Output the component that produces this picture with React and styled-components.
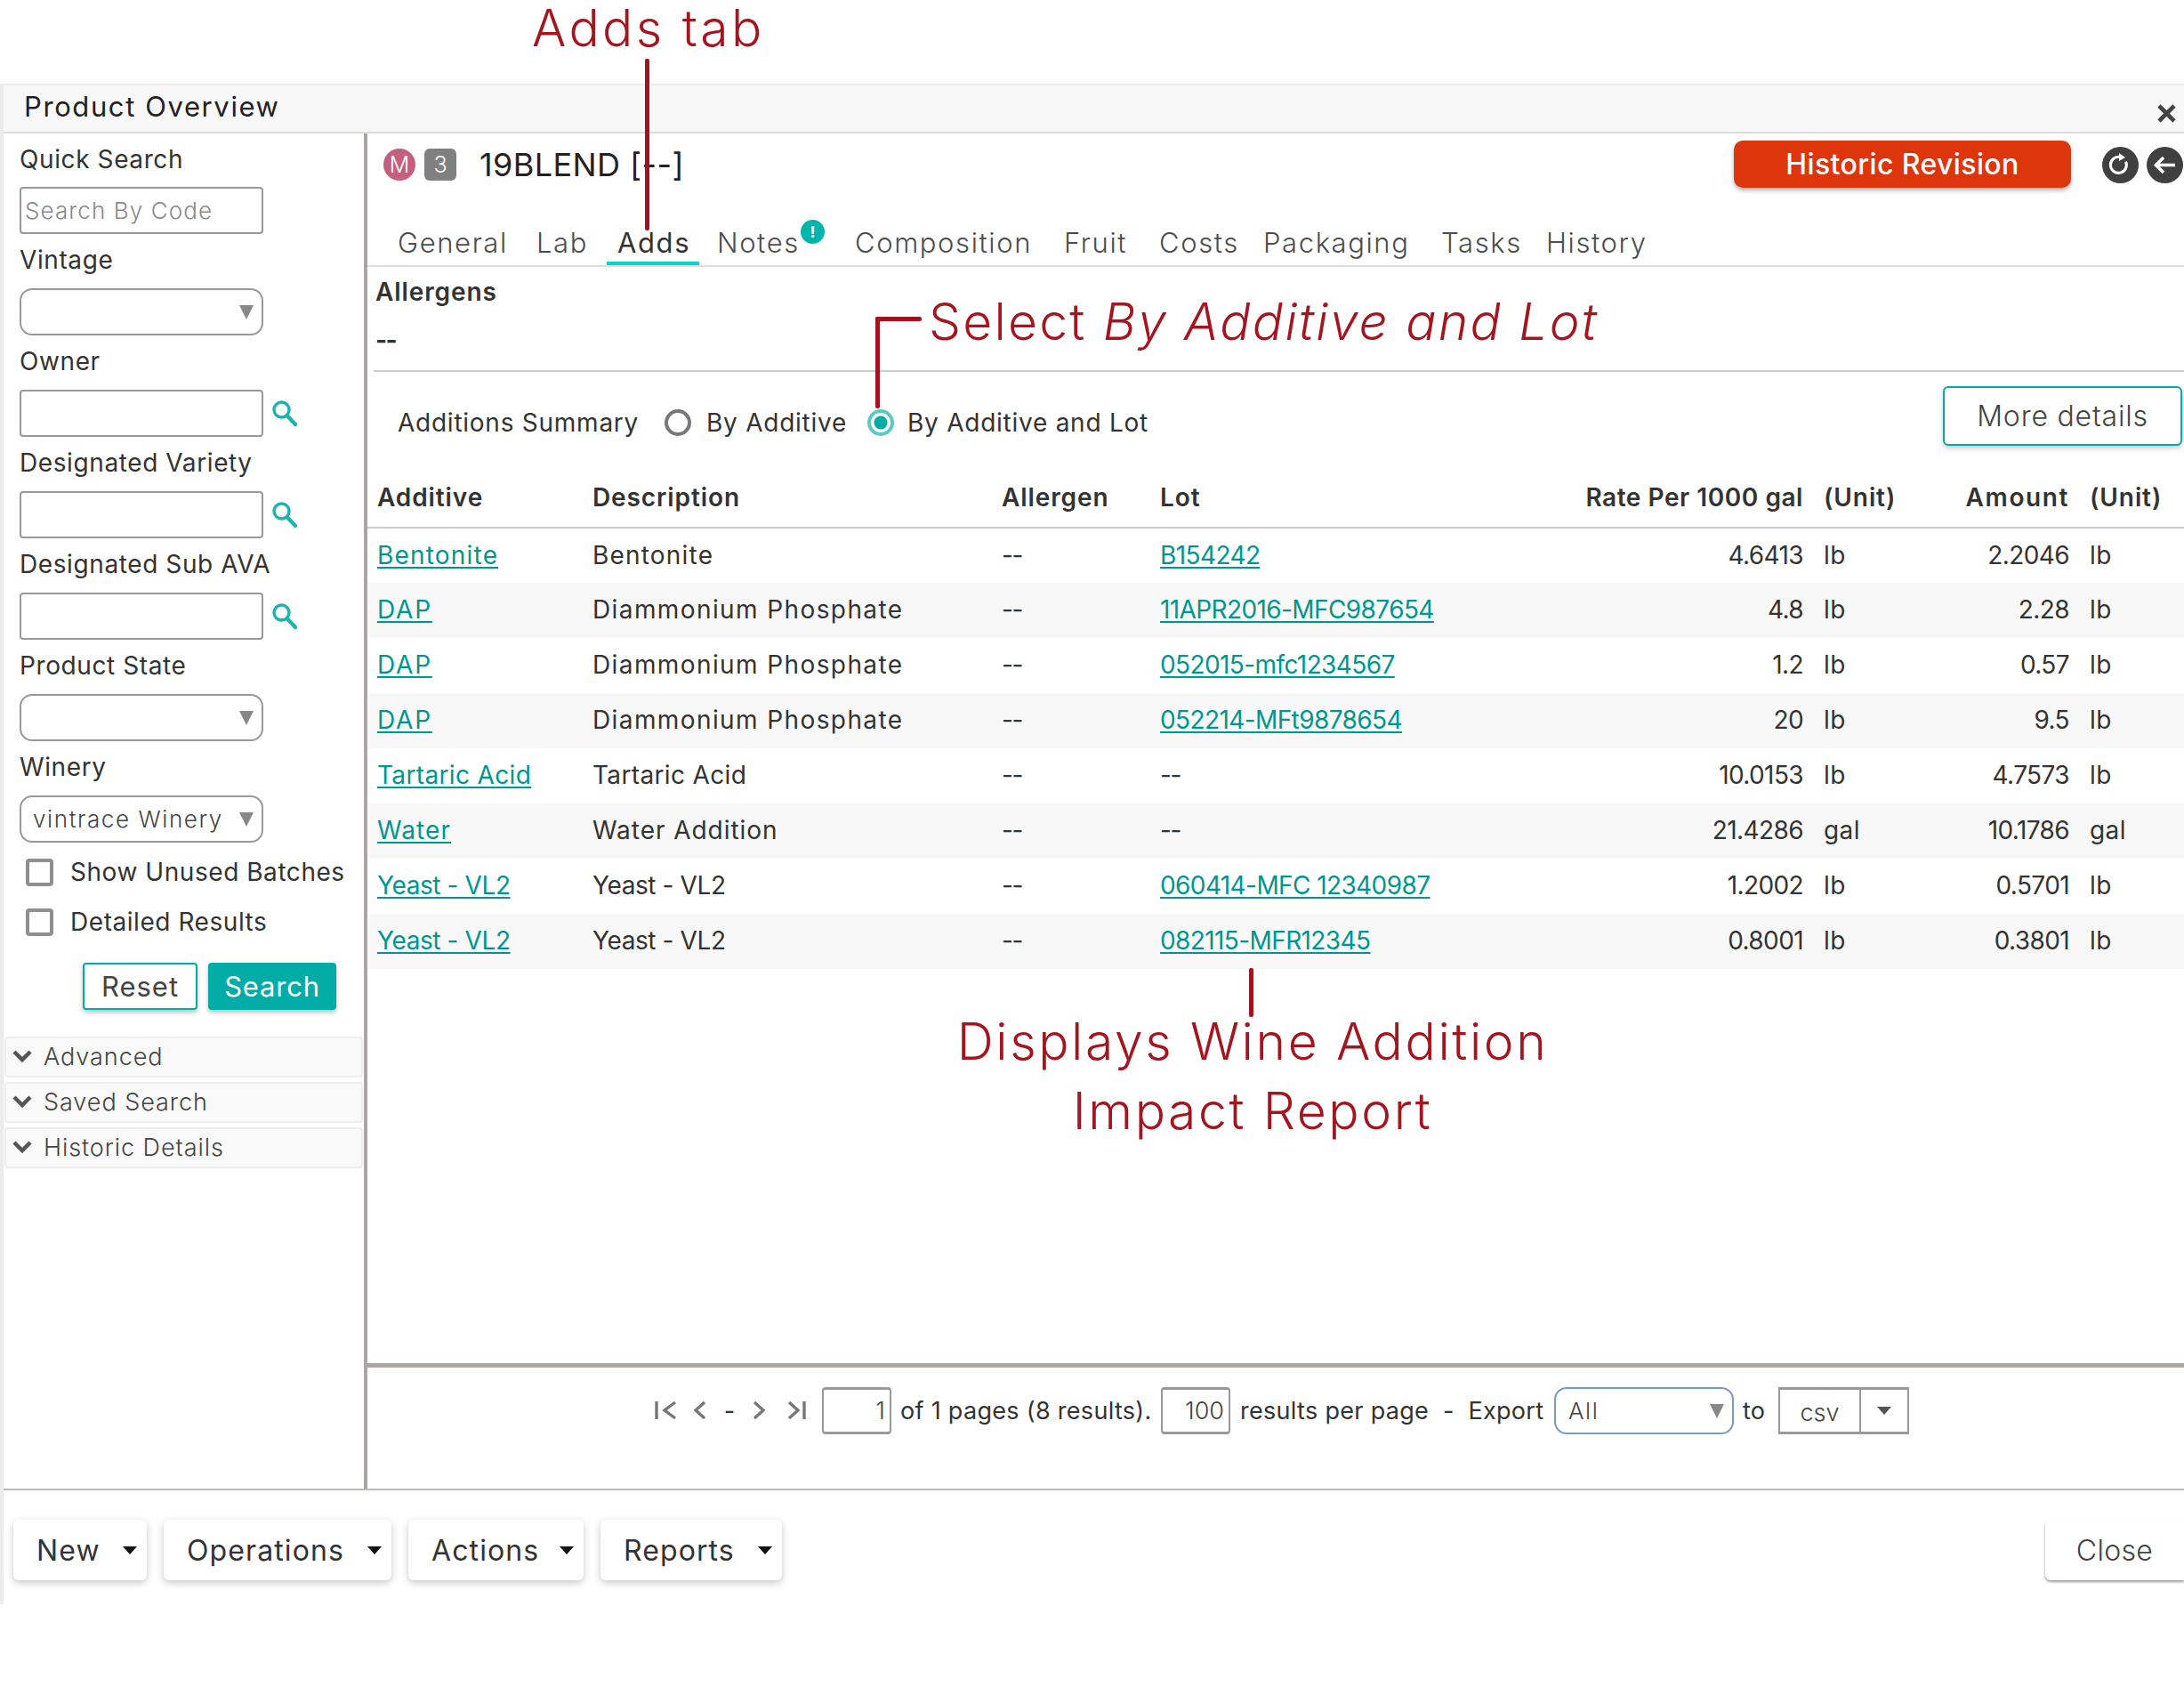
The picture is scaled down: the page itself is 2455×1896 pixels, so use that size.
import React from "react";
import styled, { createGlobalStyle } from "styled-components";

const Global = createGlobalStyle`
  html, body { margin: 0; padding: 0; background: #fff; }
  body { font-family: Inter, "Open Sans", "Liberation Sans", sans-serif; color: #333; }
  * { box-sizing: border-box; }
`;

const Page = styled.div`
  position: relative;
  width: 2455px;
  height: 1896px;
  padding-top: 94px;
  overflow: hidden;
  background: #fff;
`;

const Window = styled.div`
  height: 1709px;
  display: flex;
  flex-direction: column;
  border-left: 4px solid #ececec;
  border-top: 2px solid #eeeeee;
`;

const Header = styled.div`
  height: 54px;
  flex: none;
  display: flex;
  align-items: center;
  justify-content: space-between;
  background: #f8f8f8;
  border-bottom: 2px solid #dddddd;
  padding: 0 8px 0 23px;
`;

const HeaderTitle = styled.div`
  font-size: 31px;
  letter-spacing: 1.6px;
  color: #222;
  margin-top: -5px;
`;

const CloseX = styled.svg`
  width: 23px;
  height: 23px;
  margin-top: 11px;
`;

const Body = styled.div`
  height: 1525px;
  flex: none;
  display: flex;
  border-bottom: 2px solid #bbbbbb;
`;

const Sidebar = styled.aside`
  width: 405px;
  flex: none;
  padding-left: 18px;
`;

const Field = styled.div`
  display: flex;
  flex-direction: column;
`;

const FieldLabel = styled.label`
  height: 61px;
  display: flex;
  align-items: center;
  padding-bottom: 3px;
  font-size: 28px;
  letter-spacing: 0.6px;
  color: #333;
`;

const FirstLabel = styled(FieldLabel)`
  height: 60px;
`;

const InputRow = styled.div`
  display: flex;
  align-items: center;
`;

const TextInput = styled.input`
  width: 274px;
  height: 53px;
  border: 2px solid #999;
  border-radius: 4px;
  padding: 0 4px;
  background: #fff;
  font: 400 26px Inter, sans-serif;
  letter-spacing: 1.1px;
  color: #444;
  &::placeholder { color: #8a8a8a; opacity: 1; font-weight: 300; }
`;

const SearchIcon = styled.svg`
  width: 30px;
  height: 30px;
  margin: -2px 0 0 9px;
`;

const SelectBox = styled.div`
  position: relative;
  width: 274px;
  height: 53px;
  border: 2px solid #999;
  border-radius: 14px;
  display: flex;
  align-items: center;
  padding-left: 13px;
  font-size: 26px;
  font-weight: 300;
  letter-spacing: 1.6px;
  color: #444;
`;

const SelectArrow = styled.span`
  position: absolute;
  right: 9px;
  top: 17px;
  width: 0;
  height: 0;
  border-left: 8.5px solid transparent;
  border-right: 8.5px solid transparent;
  border-top: 16px solid #888;
`;

const CheckRow = styled.div`
  height: 56px;
  display: flex;
  align-items: center;
  padding-left: 7px;
  font-size: 28px;
  letter-spacing: 0.55px;
  color: #333;
`;

const CheckFirst = styled(CheckRow)`
  margin-top: 5px;
`;

const CheckBox = styled.span`
  width: 31px;
  height: 31px;
  border: 4px solid #8f8f8f;
  border-radius: 4px;
  margin-right: 19px;
  flex: none;
`;

const SearchActions = styled.div`
  display: flex;
  gap: 12px;
  padding-left: 71px;
  margin-top: 18px;
`;

const OutlineButton = styled.button`
  width: 129px;
  height: 53px;
  background: #fff;
  border: 2px solid #00aca5;
  border-radius: 4px;
  box-shadow: 0 3px 5px rgba(0, 0, 0, 0.25);
  font: 400 31px Inter, sans-serif;
  letter-spacing: 1px;
  color: #444;
  padding: 0;
`;

const PrimaryButton = styled.button`
  width: 144px;
  height: 53px;
  background: #00aca5;
  border: 0;
  border-radius: 4px;
  box-shadow: 0 3px 5px rgba(0, 0, 0, 0.25);
  font: 400 31px Inter, sans-serif;
  letter-spacing: 0.8px;
  color: #fff;
  padding: 0;
`;

const Accordions = styled.div`
  margin: 30px 0 0 -17px;
  width: 403px;
  display: flex;
  flex-direction: column;
  gap: 5px;
`;

const AccordionHead = styled.div`
  height: 46px;
  display: flex;
  align-items: center;
  background: #f9f9f9;
  border: 2px solid #eeeeee;
  border-radius: 4px;
  padding: 0 0 2px 6px;
  font-size: 27px;
  font-weight: 300;
  letter-spacing: 0.95px;
  color: #444;
`;

const Chevron = styled.svg`
  width: 24px;
  height: 16px;
  margin-right: 12px;
`;

const Main = styled.main`
  flex: 1;
  min-width: 0;
  display: flex;
  flex-direction: column;
  border-left: 4px solid #aaa6a2;
`;

const TitleRow = styled.div`
  height: 70px;
  flex: none;
  display: flex;
  align-items: center;
  padding: 0 1px 0 18px;
`;

const RoundBadge = styled.span`
  width: 36px;
  height: 36px;
  border-radius: 50%;
  background: #c45f7d;
  color: #fff;
  font-size: 25px;
  font-weight: 300;
  display: flex;
  align-items: center;
  justify-content: center;
`;

const SquareBadge = styled.span`
  width: 36px;
  height: 36px;
  margin-left: 10px;
  border-radius: 6px;
  background: #808080;
  color: #fff;
  font-size: 25px;
  font-weight: 300;
  display: flex;
  align-items: center;
  justify-content: center;
`;

const ProductTitle = styled.div`
  margin-left: 26px;
  font-size: 36px;
  letter-spacing: 0.4px;
  color: #222;
  font-weight: 400;
`;

const HistoricButton = styled.button`
  margin-left: auto;
  margin-top: -2px;
  width: 379px;
  height: 53px;
  background: #dd360c;
  color: #fff;
  border: 0;
  border-radius: 10px;
  box-shadow: 0 3px 5px rgba(0, 0, 0, 0.3);
  font: 500 32px Inter, sans-serif;
  letter-spacing: 0.4px;
  padding: 0;
`;

const RoundIcon = styled.svg`
  width: 41px;
  height: 41px;
  margin-left: ${(p) => p.$gap}px;
`;

const TabBar = styled.nav`
  height: 80px;
  flex: none;
  display: flex;
  align-items: flex-end;
  padding-left: 22px;
  border-bottom: 2px solid #dddddd;
`;

const Tab = styled.div`
  position: relative;
  width: ${(p) => p.$w}px;
  margin-right: ${(p) => p.$mr || 0}px;
  flex: none;
  height: 44px;
  padding-left: 12px;
  line-height: 38px;
  font-size: 31px;
  font-weight: ${(p) => (p.$active ? 400 : 300)};
  letter-spacing: 1.6px;
  color: ${(p) => (p.$active ? "#333" : "#4d4d4d")};
  border-bottom: 4px solid ${(p) => (p.$active ? "#00d5ce" : "transparent")};
  white-space: nowrap;
`;

const TabFlag = styled.span`
  position: absolute;
  left: 106px;
  top: -7px;
  width: 27px;
  height: 27px;
  border-radius: 50%;
  background: #00b5ad;
  color: #fff;
  font-size: 18px;
  line-height: 27px;
  font-weight: 700;
  text-align: center;
  letter-spacing: 0;
`;

const Allergens = styled.section`
  height: 118px;
  flex: none;
  margin-left: 7px;
  padding: 10px 0 0 2px;
  border-bottom: 2px solid #cccccc;
`;

const AllergenHead = styled.div`
  line-height: 36px;
  font-size: 28px;
  font-weight: 600;
  letter-spacing: 0.9px;
  color: #333;
`;

const AllergenValue = styled(AllergenHead)`
  margin-top: 18px;
  font-weight: 700;
  letter-spacing: -1.5px;
`;

const SummaryRow = styled.div`
  height: 114px;
  flex: none;
  display: flex;
  align-items: center;
  padding-left: 34px;
`;

const SummaryText = styled.span`
  width: ${(p) => p.$w}px;
  flex: none;
  font-size: 28px;
  letter-spacing: 0.75px;
  color: #333;
  white-space: nowrap;
`;

const Radio = styled.span`
  width: 30px;
  height: 30px;
  margin-right: ${(p) => p.$gap}px;
  flex: none;
  border-radius: 50%;
  border: 4px solid ${(p) => (p.$on ? "#5cc9c4" : "#777")};
  background: ${(p) => (p.$on ? "radial-gradient(circle, #00aca5 0 7px, #fff 8px)" : "#fff")};
`;

const DetailsButton = styled.button`
  margin-left: auto;
  align-self: flex-start;
  margin-top: 16px;
  width: 269px;
  height: 67px;
  margin-right: 2px;
  background: #fff;
  border: 2px solid #00aca5;
  border-radius: 6px;
  box-shadow: 0 3px 5px rgba(0, 0, 0, 0.2);
  font: 300 32px Inter, sans-serif;
  letter-spacing: 0.8px;
  color: #444;
  padding: 0;
`;

const TableWrap = styled.div`
  flex: 1;
  min-height: 0;
`;

const Table = styled.table`
  width: 100%;
  table-layout: fixed;
  border-collapse: collapse;
  font-size: 28px;
`;

const HeadRow = styled.tr`
  height: 61px;
  border-bottom: 2px solid #cccccc;
`;

const Th = styled.th`
  padding: 0 ${(p) => (p.$right ? 12 : 0)}px 6px ${(p) => (p.$right ? 0 : 11)}px;
  text-align: ${(p) => (p.$right ? "right" : "left")};
  font-weight: 600;
  letter-spacing: ${(p) => p.$ls ?? 0.9}px;
  color: #333;
  white-space: nowrap;
`;

const Row = styled.tr`
  height: 62px;
  background: ${(p) => (p.$alt ? "#f8f8f8" : "#fff")};
`;

const Td = styled.td`
  padding: 0 ${(p) => (p.$right ? 12 : 0)}px 2px ${(p) => (p.$right ? 0 : 11)}px;
  text-align: ${(p) => (p.$right ? "right" : "left")};
  letter-spacing: ${(p) => p.$ls ?? -0.6}px;
  color: #333;
  white-space: nowrap;
`;

const LinkText = styled.a`
  color: #00968f;
  text-decoration: underline;
  text-underline-offset: 3px;
`;

const Pager = styled.div`
  height: 141px;
  flex: none;
  display: flex;
  align-items: flex-start;
  padding: 22px 0 0 322px;
  border-top: 5px solid #aaa6a2;
`;

const PagerItem = styled.svg`
  width: ${(p) => p.$w}px;
  height: 24px;
  margin: 14px ${(p) => p.$mr || 0}px 0 0;
  flex: none;
`;

const PagerText = styled.span`
  width: ${(p) => p.$w}px;
  margin-left: ${(p) => p.$ml || 0}px;
  flex: none;
  height: 53px;
  display: flex;
  align-items: center;
  justify-content: ${(p) => (p.$center ? "center" : "flex-start")};
  font-size: 27px;
  letter-spacing: 0.3px;
  color: #333;
  white-space: nowrap;
`;

const PageInput = styled.input`
  width: 78px;
  height: 53px;
  flex: none;
  border: 2px solid #999;
  border-top-width: 3px;
  border-bottom-width: 3px;
  border-radius: 4px;
  padding: 0 5px;
  text-align: right;
  font: 300 27px Inter, sans-serif;
  color: #444;
  background: #fff;
`;

const ExportSelect = styled(SelectBox)`
  width: 202px;
  padding-left: 14px;
  border-color: #7b9cbc;
`;

const FormatBox = styled.div`
  width: 147px;
  height: 53px;
  flex: none;
  display: flex;
  border: 2px solid #999;
  border-top-width: 3px;
  border-bottom-width: 3px;
`;

const FormatValue = styled.span`
  width: 91px;
  display: flex;
  align-items: center;
  justify-content: center;
  padding-top: 3px;
  border-right: 2px solid #999;
  font-size: 27px;
  font-weight: 300;
  color: #444;
`;

const FormatCaret = styled.span`
  flex: 1;
  display: flex;
  align-items: center;
  justify-content: center;
`;

const Caret = styled.span`
  width: 0;
  height: 0;
  border-left: 8px solid transparent;
  border-right: 8px solid transparent;
  border-top: 9px solid ${(p) => p.$c || "#111"};
`;

const Footer = styled.footer`
  flex: 1;
  display: flex;
  gap: 19px;
  padding: 33px 0 0 11px;
`;

const MenuButton = styled.button`
  width: ${(p) => p.$w}px;
  height: 68px;
  display: flex;
  align-items: center;
  justify-content: space-between;
  padding: 0 11px 0 26px;
  background: #fff;
  border: 0;
  border-radius: 6px;
  box-shadow: 0 3px 9px rgba(0, 0, 0, 0.22);
  font: 400 32px Inter, sans-serif;
  letter-spacing: 1.1px;
  color: #333;
`;

const CloseButton = styled.button`
  margin-left: auto;
  width: 156px;
  height: 68px;
  background: #fff;
  border: 0;
  border-radius: 6px 0 0 6px;
  box-shadow: 0 2px 3px rgba(0, 0, 0, 0.4);
  font: 300 32px Inter, sans-serif;
  letter-spacing: 0.3px;
  color: #444;
  padding: 0;
`;

const Note = styled.div`
  position: absolute;
  left: ${(p) => p.$x}px;
  top: ${(p) => p.$y}px;
  font-size: 57px;
  line-height: 62px;
  font-weight: 300;
  letter-spacing: ${(p) => p.$ls}px;
  color: #a5151f;
  white-space: nowrap;
`;

const NoteCentered = styled(Note)`
  line-height: 78px;
  text-align: center;
  transform: translateX(-50%);
`;

const NoteLine = styled.div`
  position: absolute;
  left: ${(p) => p.$x}px;
  top: ${(p) => p.$y}px;
  width: ${(p) => p.$w}px;
  height: ${(p) => p.$h}px;
  background: #a0141f;
  border-radius: 2px;
`;

const Mag = () => (
  <SearchIcon viewBox="0 0 30 30" aria-hidden="true">
    <circle cx="11.5" cy="11.5" r="8.5" fill="none" stroke="#1ab5ae" strokeWidth="3.4" />
    <path d="M18 18.5 L27 28" stroke="#1ab5ae" strokeWidth="4.4" strokeLinecap="round" />
  </SearchIcon>
);

const Chev = () => (
  <Chevron viewBox="0 0 24 16" aria-hidden="true">
    <path d="M3 3 L12 12 L21 3" fill="none" stroke="#555" strokeWidth="4.5" />
  </Chevron>
);

const tabs = [
  ["General", 156],
  ["Lab", 91],
  ["Adds", 104, 8],
  ["Notes", 155],
  ["Composition", 235],
  ["Fruit", 107],
  ["Costs", 117],
  ["Packaging", 200],
  ["Tasks", 118],
  ["History", 130],
];

const rows = [
  ["Bentonite", 1.2, "Bentonite", 1.2, "B154242", "4.6413", "lb", "2.2046", "lb"],
  ["DAP", 1.8, "Diammonium Phosphate", 1.4, "11APR2016-MFC987654", "4.8", "lb", "2.28", "lb"],
  ["DAP", 1.8, "Diammonium Phosphate", 1.4, "052015-mfc1234567", "1.2", "lb", "0.57", "lb"],
  ["DAP", 1.8, "Diammonium Phosphate", 1.4, "052214-MFt9878654", "20", "lb", "9.5", "lb"],
  ["Tartaric Acid", 0.35, "Tartaric Acid", 0.35, "--", "10.0153", "lb", "4.7573", "lb"],
  ["Water", 1.1, "Water Addition", 0.95, "--", "21.4286", "gal", "10.1786", "gal"],
  ["Yeast - VL2", -0.4, "Yeast - VL2", -0.4, "060414-MFC 12340987", "1.2002", "lb", "0.5701", "lb"],
  ["Yeast - VL2", -0.4, "Yeast - VL2", -0.4, "082115-MFR12345", "0.8001", "lb", "0.3801", "lb"],
];

export default function App() {
  return (
    <Page>
      <Global />
      <Window>
        <Header>
          <HeaderTitle>Product Overview</HeaderTitle>
          <CloseX viewBox="0 0 23 23" aria-hidden="true">
            <path d="M3 3 L20 20 M20 3 L3 20" stroke="#444" strokeWidth="4.6" />
          </CloseX>
        </Header>
        <Body>
          <Sidebar>
            <Field>
              <FirstLabel>Quick Search</FirstLabel>
              <TextInput placeholder="Search By Code" readOnly />
            </Field>
            <Field>
              <FieldLabel>Vintage</FieldLabel>
              <SelectBox><SelectArrow /></SelectBox>
            </Field>
            <Field>
              <FieldLabel>Owner</FieldLabel>
              <InputRow><TextInput readOnly /><Mag /></InputRow>
            </Field>
            <Field>
              <FieldLabel>Designated Variety</FieldLabel>
              <InputRow><TextInput readOnly /><Mag /></InputRow>
            </Field>
            <Field>
              <FieldLabel>Designated Sub AVA</FieldLabel>
              <InputRow><TextInput readOnly /><Mag /></InputRow>
            </Field>
            <Field>
              <FieldLabel>Product State</FieldLabel>
              <SelectBox><SelectArrow /></SelectBox>
            </Field>
            <Field>
              <FieldLabel>Winery</FieldLabel>
              <SelectBox>vintrace Winery<SelectArrow /></SelectBox>
            </Field>
            <CheckFirst><CheckBox />Show Unused Batches</CheckFirst>
            <CheckRow><CheckBox />Detailed Results</CheckRow>
            <SearchActions>
              <OutlineButton>Reset</OutlineButton>
              <PrimaryButton>Search</PrimaryButton>
            </SearchActions>
            <Accordions>
              <AccordionHead><Chev />Advanced</AccordionHead>
              <AccordionHead><Chev />Saved Search</AccordionHead>
              <AccordionHead><Chev />Historic Details</AccordionHead>
            </Accordions>
          </Sidebar>
          <Main>
            <TitleRow>
              <RoundBadge>M</RoundBadge>
              <SquareBadge>3</SquareBadge>
              <ProductTitle>19BLEND [--]</ProductTitle>
              <HistoricButton>Historic Revision</HistoricButton>
              <RoundIcon $gap={35} viewBox="0 0 41 41" aria-hidden="true">
                <circle cx="20.5" cy="20.5" r="20.5" fill="#404040" />
                <path d="M26.5 16.5 A9 9 0 1 1 20 11.5" fill="none" stroke="#fff" strokeWidth="3" />
                <path d="M19 7 L26 12 L19 16 Z" fill="#fff" />
              </RoundIcon>
              <RoundIcon $gap={9} viewBox="0 0 41 41" aria-hidden="true">
                <circle cx="20.5" cy="20.5" r="20.5" fill="#404040" />
                <path d="M32 20.5 H11 M19 12 L10.5 20.5 L19 29" fill="none" stroke="#fff" strokeWidth="3.6" />
              </RoundIcon>
            </TitleRow>
            <TabBar>
              {tabs.map(([t, w, mr]) => (
                <Tab key={t} $w={w} $mr={mr} $active={t === "Adds"}>
                  {t}
                  {t === "Notes" && <TabFlag>!</TabFlag>}
                </Tab>
              ))}
            </TabBar>
            <Allergens>
              <AllergenHead>Allergens</AllergenHead>
              <AllergenValue>--</AllergenValue>
            </Allergens>
            <SummaryRow>
              <SummaryText $w={300}>Additions Summary</SummaryText>
              <Radio $gap={17} />
              <SummaryText $w={181}>By Additive</SummaryText>
              <Radio $on $gap={15} />
              <SummaryText>By Additive and Lot</SummaryText>
              <DetailsButton>More details</DetailsButton>
            </SummaryRow>
            <TableWrap>
              <Table>
                <colgroup>
                  <col style={{ width: 242 }} />
                  <col style={{ width: 460 }} />
                  <col style={{ width: 178 }} />
                  <col style={{ width: 427 }} />
                  <col style={{ width: 319 }} />
                  <col style={{ width: 141 }} />
                  <col style={{ width: 158 }} />
                  <col />
                </colgroup>
                <thead>
                  <HeadRow>
                    <Th>Additive</Th>
                    <Th>Description</Th>
                    <Th>Allergen</Th>
                    <Th>Lot</Th>
                    <Th $right $ls={0.55}>Rate Per 1000 gal</Th>
                    <Th>(Unit)</Th>
                    <Th $right $ls={1.6}>Amount</Th>
                    <Th>(Unit)</Th>
                  </HeadRow>
                </thead>
                <tbody>
                  {rows.map((r, i) => (
                    <Row key={i} $alt={i % 2 === 1}>
                      <Td $ls={r[1]}><LinkText>{r[0]}</LinkText></Td>
                      <Td $ls={r[3]}>{r[2]}</Td>
                      <Td $ls={-1.4}>--</Td>
                      <Td $ls={r[4] === "--" ? -1.4 : undefined}>{r[4] === "--" ? "--" : <LinkText>{r[4]}</LinkText>}</Td>
                      <Td $right>{r[5]}</Td>
                      <Td $ls={0.4}>{r[6]}</Td>
                      <Td $right>{r[7]}</Td>
                      <Td $ls={0.4}>{r[8]}</Td>
                    </Row>
                  ))}
                </tbody>
              </Table>
            </TableWrap>
            <Pager>
              <PagerItem $w={30} $mr={14} viewBox="0 0 30 24" aria-hidden="true">
                <path d="M3 2 V22 M24 3 L12 12 L24 21" fill="none" stroke="#777" strokeWidth="3.4" />
              </PagerItem>
              <PagerItem $w={15} viewBox="0 0 15 24" aria-hidden="true">
                <path d="M13 3 L3 12 L13 21" fill="none" stroke="#777" strokeWidth="3.4" />
              </PagerItem>
              <PagerText $w={52} $center>-</PagerText>
              <PagerItem $w={15} $mr={24} viewBox="0 0 15 24" aria-hidden="true">
                <path d="M2 3 L12 12 L2 21" fill="none" stroke="#777" strokeWidth="3.4" />
              </PagerItem>
              <PagerItem $w={22} $mr={17} viewBox="0 0 22 24" aria-hidden="true">
                <path d="M2 3 L12 12 L2 21 M19 2 V22" fill="none" stroke="#777" strokeWidth="3.4" />
              </PagerItem>
              <PageInput defaultValue="1" readOnly />
              <PagerText $w={293} $ml={10}>of 1 pages (8 results).</PagerText>
              <PageInput defaultValue="100" readOnly />
              <PagerText $w={353} $ml={11}>results per page&nbsp; -&nbsp; Export</PagerText>
              <ExportSelect>All<SelectArrow /></ExportSelect>
              <PagerText $w={40} $ml={10}>to</PagerText>
              <FormatBox>
                <FormatValue>csv</FormatValue>
                <FormatCaret><Caret $c="#555" /></FormatCaret>
              </FormatBox>
            </Pager>
          </Main>
        </Body>
        <Footer>
          <MenuButton $w={150}>New<Caret /></MenuButton>
          <MenuButton $w={256}>Operations<Caret /></MenuButton>
          <MenuButton $w={197}>Actions<Caret /></MenuButton>
          <MenuButton $w={204}>Reports<Caret /></MenuButton>
          <CloseButton>Close</CloseButton>
        </Footer>
      </Window>

      <Note $x={598} $y={1} $ls={3.3}>Adds tab</Note>
      <NoteLine $x={725} $y={66} $w={5} $h={193} />
      <Note $x={1044} $y={331} $ls={2.2}>Select <em>By Additive and Lot</em></Note>
      <NoteLine $x={984} $y={356} $w={52} $h={5} />
      <NoteLine $x={984} $y={356} $w={5} $h={103} />
      <NoteLine $x={1404} $y={1088} $w={5} $h={55} />
      <NoteCentered $x={1408} $y={1132} $ls={2.6}>Displays Wine Addition<br />Impact Report</NoteCentered>
    </Page>
  );
}
